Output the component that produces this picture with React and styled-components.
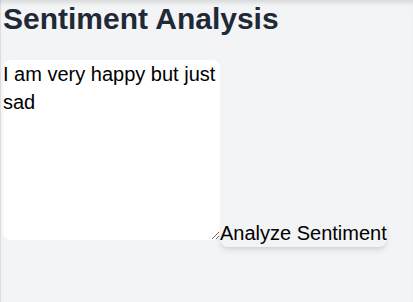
import React, { useState } from "react";
import styled, { createGlobalStyle } from "styled-components";

const GlobalStyle = createGlobalStyle`
  html, body {
    margin: 0;
    padding: 0;
    height: 100%;
    background: #f3f4f6;
  }
  body {
    font-family: "Liberation Sans", Arial, sans-serif;
    box-shadow: inset 0 5px 6px -4px rgba(0, 0, 0, 0.18),
      inset 1px 0 0 rgba(0, 0, 0, 0.08);
  }
`;

const Page = styled.div`
  padding: 1px 0 0 3px;
`;

const Title = styled.h1`
  margin: 0 0 23px 0;
  font-size: 30px;
  line-height: 36px;
  font-weight: 700;
  color: #1f2937;
`;

const Form = styled.div`
  font-size: 20px;
  line-height: 28px;
`;

const Input = styled.textarea`
  width: 217px;
  height: 180px;
  margin: 0;
  padding: 0;
  border: 0;
  border-radius: 8px;
  background: #ffffff;
  color: #000000;
  font-family: "Liberation Sans", Arial, sans-serif;
  font-size: 20px;
  line-height: 28px;
  outline: none;
  vertical-align: baseline;
`;

const Button = styled.button`
  margin: 0;
  padding: 0;
  border: 0;
  border-radius: 8px;
  background: #f3f4f6;
  color: #000000;
  font-family: "Liberation Sans", Arial, sans-serif;
  font-size: 20px;
  line-height: 28px;
  box-shadow: 0 4px 6px -1px rgba(0, 0, 0, 0.1),
    0 2px 4px -2px rgba(0, 0, 0, 0.1);
  cursor: pointer;
`;

export default function App() {
  const [text, setText] = useState("I am very happy but just sad");
  return (
    <>
      <GlobalStyle />
      <Page>
        <Title>Sentiment Analysis</Title>
        <Form>
          <Input value={text} onChange={(e) => setText(e.target.value)} />
          <Button>Analyze Sentiment</Button>
        </Form>
      </Page>
    </>
  );
}
